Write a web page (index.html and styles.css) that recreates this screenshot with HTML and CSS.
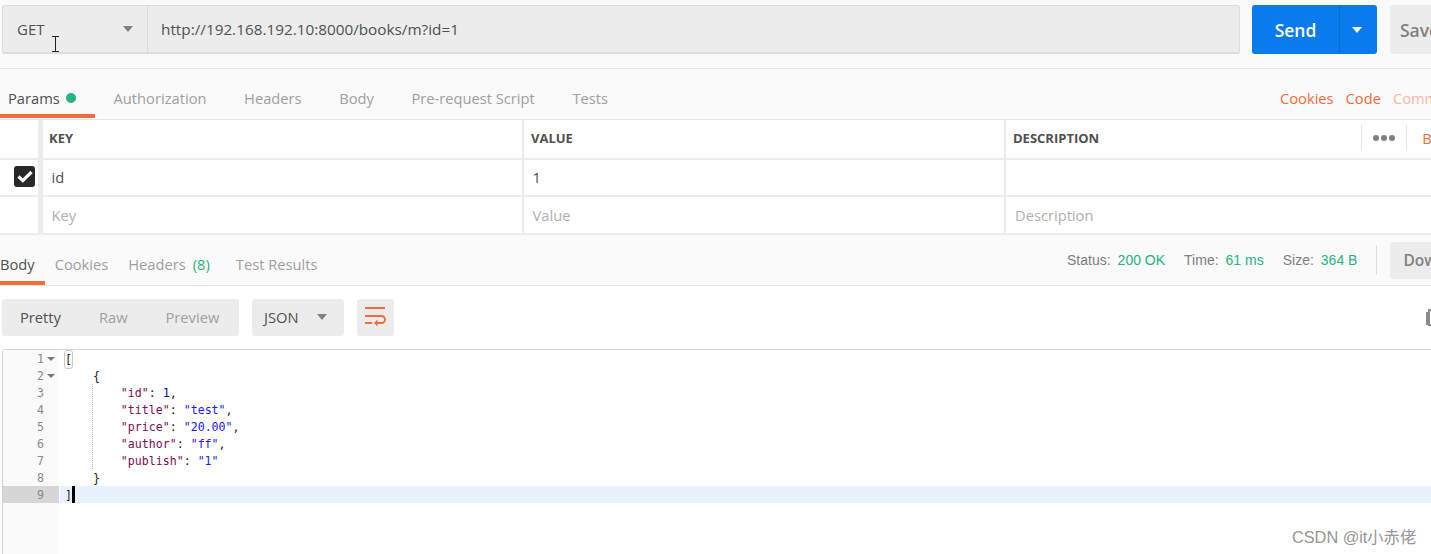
FILE: index.html
```html
<!DOCTYPE html>
<html lang="en">
<head>
<meta charset="utf-8">
<title>Postman</title>
<link rel="stylesheet" href="styles.css">
</head>
<body>
<div class="page">
  <header class="topbar">
    <div class="request">
      <div class="method"><span>GET</span><i class="caret"></i></div>
      <div class="url">http://192.168.192.10:8000/books/m?id=1</div>
    </div>
    <div class="send"><span class="send-label">Send</span><span class="send-arrow"><i class="caret caret-white"></i></span></div>
    <div class="save">Save</div>
  </header>

  <nav class="tabs">
    <span class="tab tab-first active">Params <i class="dot"></i></span>
    <span class="tab">Authorization</span>
    <span class="tab">Headers</span>
    <span class="tab">Body</span>
    <span class="tab">Pre-request Script</span>
    <span class="tab">Tests</span>
    <span class="tab-links"><span>Cookies</span><span>Code</span><span class="faded">Comments</span></span>
  </nav>

  <section class="params">
    <div class="row row-head">
      <div class="cell-check"></div>
      <div class="cell cell-key">KEY</div>
      <div class="cell cell-val">VALUE</div>
      <div class="cell cell-desc">DESCRIPTION<span class="head-tools"><span class="dots"><i></i><i></i><i></i></span><span class="bulk">Bulk Edit</span></span></div>
    </div>
    <div class="row row-body row-filled">
      <div class="cell-check"><span class="check"><svg viewBox="0 0 16 13" width="16" height="13"><path d="M1.5 6.5 5.8 10.6 14.5 2" fill="none" stroke="#fff" stroke-width="3.2"/></svg></span></div>
      <div class="cell cell-key">id</div>
      <div class="cell cell-val">1</div>
      <div class="cell cell-desc"></div>
    </div>
    <div class="row row-body row-empty">
      <div class="cell-check"></div>
      <div class="cell cell-key">Key</div>
      <div class="cell cell-val">Value</div>
      <div class="cell cell-desc">Description</div>
    </div>
  </section>

  <nav class="restabs">
    <span class="rtab active">Body</span>
    <span class="rtab">Cookies</span>
    <span class="rtab">Headers <em>(8)</em></span>
    <span class="rtab">Test Results</span>
    <div class="status">
      <span>Status:<b>200 OK</b></span>
      <span>Time:<b>61 ms</b></span>
      <span>Size:<b>364 B</b></span>
      <i class="vr"></i>
      <span class="download">Download</span>
    </div>
  </nav>

  <div class="toolbar">
    <div class="seg"><span class="seg-on">Pretty</span><span>Raw</span><span>Preview</span></div>
    <div class="format"><span>JSON</span><i class="caret"></i></div>
    <div class="wrap"><svg width="21" height="20" viewBox="0 0 21 20"><path d="M0 1H20M0 9H16.5a3.5 3.5 0 0 1 0 7H11M0 16H7" fill="none" stroke="#f26b3a" stroke-width="2"/><path d="M12.5 12.5 9 16l3.5 3.5z" fill="#f26b3a"/></svg></div>
    <svg class="copy" width="12" height="18" viewBox="0 0 12 18"><path d="M1 3v12h2M3 1h9v15H3z" fill="none" stroke="#8a8a8a" stroke-width="2"/></svg>
  </div>

  <div class="editor">
    <div class="gutter">
      <div class="ln">1<i class="fold"></i></div>
      <div class="ln">2<i class="fold"></i></div>
      <div class="ln">3</div>
      <div class="ln">4</div>
      <div class="ln">5</div>
      <div class="ln">6</div>
      <div class="ln">7</div>
      <div class="ln">8</div>
      <div class="ln ln-on">9</div>
    </div>
    <div class="code">
      <div class="cl"><span class="match">[</span></div>
      <div class="cl">    {</div>
      <div class="cl">        <span class="k">"id"</span>: <span class="n">1</span>,</div>
      <div class="cl">        <span class="k">"title"</span>: <span class="s">"test"</span>,</div>
      <div class="cl">        <span class="k">"price"</span>: <span class="s">"20.00"</span>,</div>
      <div class="cl">        <span class="k">"author"</span>: <span class="s">"ff"</span>,</div>
      <div class="cl">        <span class="k">"publish"</span>: <span class="s">"1"</span></div>
      <div class="cl">    }</div>
      <div class="cl cl-on">]<i class="cursor"></i></div>
      <i class="guide"></i>
    </div>
  </div>
</div>
<svg class="ibeam" width="9" height="16" viewBox="0 0 9 16"><path d="M1 .5H8M4.5 .5V15.5M1 15.5H8" fill="none" stroke="#222" stroke-width="1"/></svg>
<div class="watermark">CSDN @it小赤佬</div>
</body>
</html>
```

FILE: styles.css
```css
html, body { margin: 0; padding: 0; height: 554px; overflow: hidden; background: #fff; }
body { position: relative; width: 1431px; font-family: "Open Sans", "Noto Sans", sans-serif; font-size: 14.7px; color: #505050; }
i, em { font-style: normal; display: block; }
.page { width: 1500px; }

.caret { width: 0; height: 0; border-left: 5px solid transparent; border-right: 5px solid transparent; border-top: 6px solid #808080; }
.caret-white { border-top-color: #fff; }

.topbar { display: flex; height: 69px; box-sizing: border-box; padding: 5px 0 0 2px; background: #fafafa; border-bottom: 1px solid #e6e6e6; }
.request { display: flex; width: 1238px; height: 49px; box-sizing: border-box; background: #ececec; border: 1px solid #dcdcdc; border-bottom-width: 2px; border-radius: 3px; }
.method { width: 145px; box-sizing: border-box; display: flex; align-items: center; justify-content: space-between; padding: 0 14px 0 14px; border-right: 1px solid #dcdcdc; font-size: 15px; }
.url { flex: 1; display: flex; align-items: center; padding-left: 13px; font-size: 15.3px; }
.send { display: flex; width: 125px; height: 49px; margin-left: 12px; background: #097bed; border-radius: 3px; color: #fff; font-size: 17.5px; font-weight: 600; }
.send-label { width: 87px; display: flex; align-items: center; justify-content: center; border-right: 1px solid #0a6cd0; }
.send-arrow { flex: 1; display: flex; align-items: center; justify-content: center; padding-right: 4px; }
.save { width: 90px; height: 49px; margin-left: 13px; display: flex; align-items: center; padding-left: 10px; box-sizing: border-box; background: #ececec; border-radius: 3px; color: #808080; font-size: 17.5px; font-weight: 600; }

.tabs { display: flex; height: 51px; box-sizing: border-box; background: #fafafa; border-bottom: 1px solid #e6e6e6; }
.tab { display: flex; align-items: center; gap: 6px; height: 49px; box-sizing: border-box; padding: 13px 18.8px 0; color: #a0a0a0; border-bottom: 4px solid transparent; }
.tab-first { padding-left: 8px; padding-right: 19px; }
.tab.active { color: #505050; border-bottom-color: #f26b3a; }
.dot { width: 10px; height: 10px; border-radius: 50%; background: #26b47f; }
.tab-links { display: flex; gap: 12px; margin-left: auto; width: 220px; padding-top: 13px; box-sizing: border-box; align-items: center; height: 45px; color: #f26b3a; }
.faded { opacity: .45; }

.row { display: flex; box-sizing: border-box; background: #fff; border-bottom: 2px solid #ececec; }
.row-head { height: 40px; }
.row-body { height: 37px; }
.row-body + .row-body { height: 38px; }
.cell-check { border-right: 5px solid #ececec; display: flex; align-items: center; padding-left: 14px; width: 24px; }
.cell { display: flex; align-items: center; box-sizing: border-box; padding-left: 8.5px; }
.cell-key { width: 481px; border-right: 2px solid #ececec; }
.cell-val { width: 482px; border-right: 2px solid #ececec; }
.cell-desc { flex: 1; padding-left: 7px; }
.row-head .cell { font-size: 13px; font-weight: 700; padding: 0 0 2px 6px; }
.row-head .cell-val, .row-head .cell-desc { padding-left: 7px; }
.row-filled .cell { padding-bottom: 2px; }
.row-empty .cell { color: #b0b0b0; }
.row-empty .cell-desc { padding-left: 9px; }
.check { width: 21px; height: 21px; margin-bottom: 2px; border-radius: 3px; background: #282828; display: flex; align-items: center; justify-content: center; }
.head-tools { display: flex; align-items: center; height: 26px; margin-left: 262px; font-weight: 400; font-size: 14.7px; }
.dots { display: flex; gap: 2px; height: 26px; align-items: center; width: 46px; box-sizing: border-box; justify-content: center; border-left: 1px solid #e6e6e6; border-right: 1px solid #e6e6e6; }
.dots i { width: 6px; height: 6px; border-radius: 50%; background: #808080; }
.bulk { color: #f26b3a; margin-left: 15px; white-space: nowrap; }

.restabs { display: flex; height: 51px; box-sizing: border-box; background: #fafafa; border-bottom: 1px solid #e6e6e6; }
.rtab { display: flex; align-items: center; gap: 7px; height: 50px; box-sizing: border-box; padding: 12px 10px 0; color: #a0a0a0; border-bottom: 4px solid transparent; }
.rtab:first-child { padding-left: 0; }
.rtab:nth-child(3) { margin-right: 6px; }
.rtab.active { color: #505050; border-bottom-color: #f26b3a; }
.rtab em { color: #26b47f; }
.status { display: flex; align-items: center; margin-left: auto; width: 433px; flex: none; height: 50px; font-family: "Liberation Sans", sans-serif; font-size: 14px; color: #808080; gap: 19px; white-space: nowrap; }
.status b { font-weight: 400; color: #26b47f; margin-left: 7px; }
.vr { width: 1px; height: 30px; background: #dcdcdc; flex: none; }
.download { width: 120px; height: 37px; margin-left: -6px; padding-left: 13px; box-sizing: border-box; display: flex; align-items: center; background: #ececec; border-radius: 3px; font-family: "Open Sans", sans-serif; font-size: 15.5px; font-weight: 600; }

.toolbar { display: flex; height: 63px; box-sizing: border-box; padding: 13px 0 0 2px; }
.seg { display: flex; width: 237px; height: 37px; align-items: center; padding: 0 0 2px 18px; background: #ececec; border-radius: 3px; color: #a0a0a0; box-sizing: border-box; gap: 38px; }
.seg-on { color: #505050; }
.format { display: flex; width: 92px; height: 37px; margin-left: 13px; align-items: center; justify-content: space-between; padding: 0 17px 2px 12px; box-sizing: border-box; background: #ececec; border-radius: 3px; }
.wrap { width: 37px; height: 37px; margin-left: 13px; display: flex; align-items: center; justify-content: center; padding-bottom: 1px; box-sizing: border-box; background: #ececec; border-radius: 3px; }
.copy { margin-left: 1032px; margin-top: 10px; }

.editor { display: flex; margin-left: 2px; height: 205px; border-top: 1px solid #d4d4d4; border-left: 1px solid #d4d4d4; font-family: "DejaVu Sans Mono", monospace; font-size: 11.6px; line-height: 17px; border-top-left-radius: 3px; }
.gutter { width: 56px; background: #fafafa; margin-right: 1px; flex: none; }
.ln { display: flex; height: 17px; padding: 1px 0 0 34px; box-sizing: border-box; color: #8a8a8a; position: relative; align-items: center; }
.ln-on { background: #d6d6d6; }
.fold { position: absolute; left: 44px; top: 7px; width: 0; height: 0; border-left: 4px solid transparent; border-right: 4px solid transparent; border-top: 4px solid #777; }
.code { flex: 1; position: relative; color: #222; }
.cl { height: 17px; padding: 1px 0 0 5px; white-space: pre; box-sizing: border-box; }
.cl-on { background: #e8f2fe; display: flex; }
.match { display: inline-block; outline: 1px solid #c8c8c8; border-radius: 2px; }
.k { color: #7a0e57; }
.s { color: #1a1aff; }
.n { color: #0a0a90; }
.cursor { width: 3px; height: 17px; margin-top: -1px; background: #000; }
.guide { position: absolute; left: 32px; top: 34px; height: 85px; border-left: 1px dotted #bbb; }

.ibeam { position: absolute; left: 51px; top: 36px; }
.watermark { position: absolute; left: 1292px; top: 526px; font-family: "Liberation Sans", "Noto Sans CJK SC", sans-serif; font-size: 16.3px; line-height: 22px; color: #8c8c8c; opacity: .9; white-space: nowrap; }
```
